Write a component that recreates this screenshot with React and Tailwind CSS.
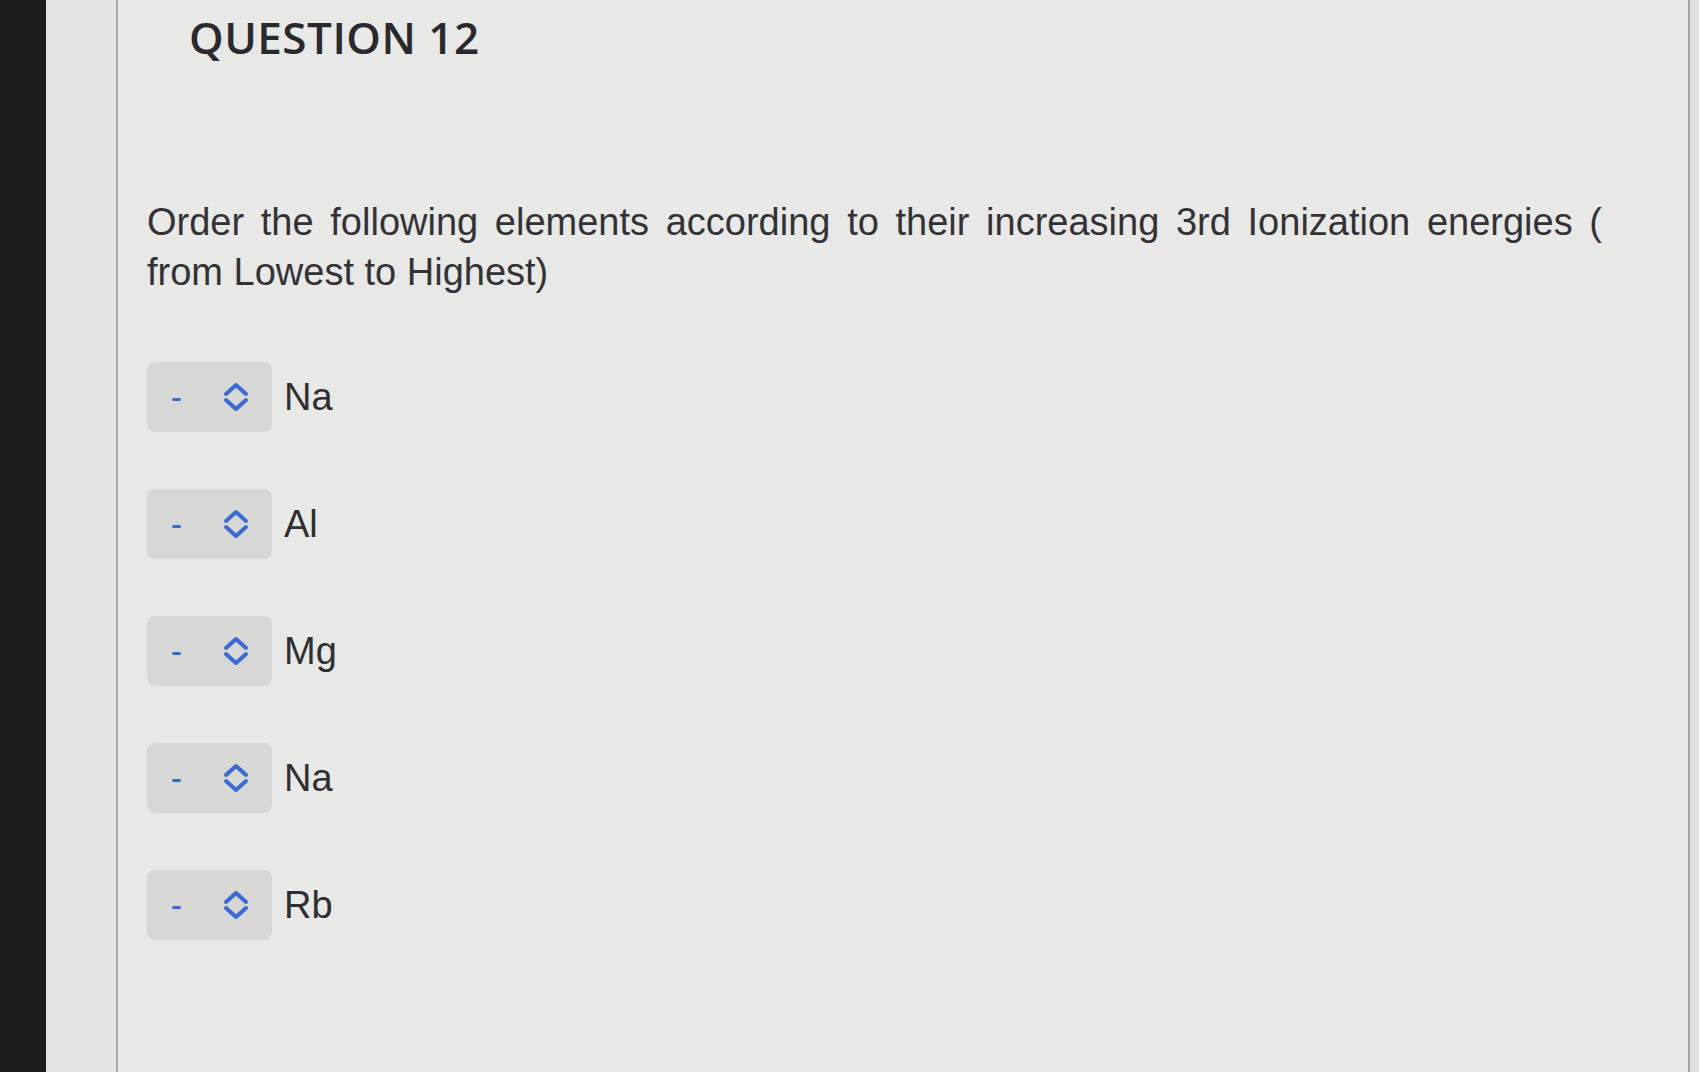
import { useState } from 'react';

const ITEMS = ['Na', 'Al', 'Mg', 'Na', 'Rb'];

function UpDown() {
  return (
    <svg width="26" height="32" viewBox="0 0 26 32" fill="none" stroke="#3a6ad6" strokeWidth="4" strokeLinecap="round" strokeLinejoin="round">
      <path d="M3 13 L13 4 L23 13" />
      <path d="M3 19 L13 28 L23 19" />
    </svg>
  );
}

function OrderRow({ label }) {
  const [value] = useState('-');
  return (
    <div className="flex items-center gap-3">
      <div className="flex h-[70px] w-[125px] items-center rounded-lg bg-[#d7d7d5] pl-[25px]">
        <span className="mt-[4px] block h-[3px] w-[9px] rounded-sm bg-[#3a6ad6]" aria-label={value} />
        <span className="ml-[42px]">
          <UpDown />
        </span>
      </div>
      <span className="text-[38px] leading-none text-[#2f2f33]">{label}</span>
    </div>
  );
}

export default function App() {
  return (
    <div className="flex h-[1072px] w-[1699px] overflow-hidden bg-[#e8e8e6] font-['Liberation_Sans',Arial,sans-serif]">
      <div className="w-[46px] shrink-0 bg-[#1d1d1d]" />
      <div className="w-[72px] shrink-0 border-r-2 border-[#a8a8a8] bg-[#e3e4e2]" />

      <main className="flex-1 border-r-2 border-[#a4a4a4] bg-[#e8e8e6] pl-[29px] pt-[7px]">
        <h1 className="ml-[42px] font-['Open_Sans',sans-serif] text-[44px] font-semibold leading-[60px] tracking-[0.5px] text-[#2a2a2e]">
          QUESTION 12
        </h1>

        <p className="mt-[130px] w-[1455px] text-justify text-[38px] leading-[50px] text-[#333337]">
          Order the following elements according to their increasing 3rd Ionization energies ( from Lowest to Highest)
        </p>

        <div className="mt-[65px] flex flex-col gap-[57px]">
          {ITEMS.map((item, i) => (
            <OrderRow key={i} label={item} />
          ))}
        </div>
      </main>

      <div className="w-[9px] shrink-0 bg-[#dedfdd]" />
    </div>
  );
}
